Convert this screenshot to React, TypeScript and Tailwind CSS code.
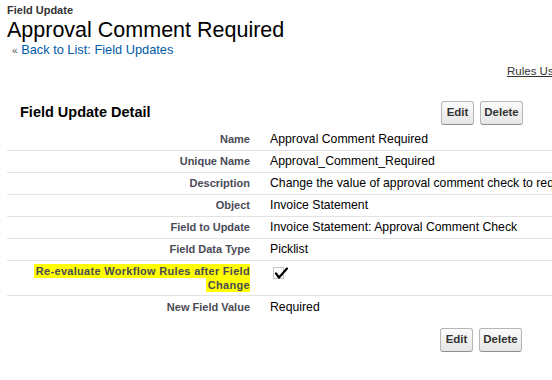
const rows: { label: string; value: string }[] = [
  { label: 'Name', value: 'Approval Comment Required' },
  { label: 'Unique Name', value: 'Approval_Comment_Required' },
  { label: 'Description', value: 'Change the value of approval comment check to required when approved' },
  { label: 'Object', value: 'Invoice Statement' },
  { label: 'Field to Update', value: 'Invoice Statement: Approval Comment Check' },
  { label: 'Field Data Type', value: 'Picklist' },
];

const Buttons = () => (
  <div className="flex gap-[6px]">
    <button className="w-[33px] h-[24px] rounded-[3px] border border-[#b5b5b5] border-b-[#8f8f8f] bg-gradient-to-b from-[#fbfbfb] to-[#e6e6e6] text-[11.5px] font-bold text-[#333]">
      Edit
    </button>
    <button className="w-[43px] h-[24px] rounded-[3px] border border-[#b5b5b5] border-b-[#8f8f8f] bg-gradient-to-b from-[#fbfbfb] to-[#e6e6e6] text-[11.5px] font-bold text-[#333]">
      Delete
    </button>
  </div>
);

const CheckedIcon = () => (
  <svg width="21" height="16" viewBox="0 0 21 16">
    <rect x="0.5" y="0.5" width="10" height="11" fill="none" stroke="#8a8a8a" strokeWidth="1" strokeDasharray="1 1" />
    <path d="M3 6.5 L6 10.5 L14 1.5" fill="none" stroke="#000" strokeWidth="2.2" strokeLinecap="round" strokeLinejoin="round" />
  </svg>
);

export default function App() {
  return (
    <div className="w-[552px] h-[380px] overflow-hidden bg-white font-['Liberation_Sans',Arial,sans-serif]">
      <div className="w-[720px]">
        <div className="pl-[7px] pt-[3px]">
          <div className="text-[11px] leading-[14px] font-bold text-[#333]">Field Update</div>
          <h1 className="text-[21.5px] leading-[26px] text-black">Approval Comment Required</h1>
          <div className="pl-[5px] text-[12.8px] leading-[14px] text-[#015ba7]">
            <span className="text-[10px] text-[#555]">«</span>{' '}
            <a className="text-[#015ba7]">Back to List: Field Updates</a>
          </div>
        </div>
        <div className="pl-[507px] pt-[7px] text-[11.5px] leading-[13px] text-[#333]">
          <a className="underline whitespace-nowrap">Rules Using This Field Update</a>
        </div>
        <div className="ml-[7px] mt-[18px]">
          <div className="flex items-center h-[33px]">
            <h2 className="w-[434px] pl-[13px] text-[14.5px] font-bold text-black">Field Update Detail</h2>
            <Buttons />
          </div>
          <div>
            {rows.map(row => (
              <div key={row.label} className="flex h-[22px] items-center border-b border-[#e3e3e3]">
                <div className="w-[253px] pr-[10px] text-right text-[11px] font-bold text-[#4a4a56]">{row.label}</div>
                <div className="pl-[10px] text-[12.25px] text-black whitespace-nowrap">{row.value}</div>
              </div>
            ))}
            <div className="flex h-[35px] border-b border-[#e3e3e3]">
              <div className="w-[253px] pr-[10px] pl-[2px] pt-[3px] text-right text-[11px] leading-[14px] tracking-[0.3px] font-bold text-[#4a4a56]">
                <span className="bg-[#ffff00] py-[1px] pl-[2px] box-decoration-clone">
                  Re-evaluate Workflow Rules after Field Change
                </span>
              </div>
              <div className="pl-[13px] pt-[6px]">
                <CheckedIcon />
              </div>
            </div>
            <div className="flex h-[22px] items-center">
              <div className="w-[253px] pr-[10px] text-right text-[11px] font-bold text-[#4a4a56]">New Field Value</div>
              <div className="pl-[10px] text-[12.25px] text-black">Required</div>
            </div>
          </div>
          <div className="flex pl-[433px] pt-[10px]">
            <Buttons />
          </div>
        </div>
      </div>
    </div>
  );
}
